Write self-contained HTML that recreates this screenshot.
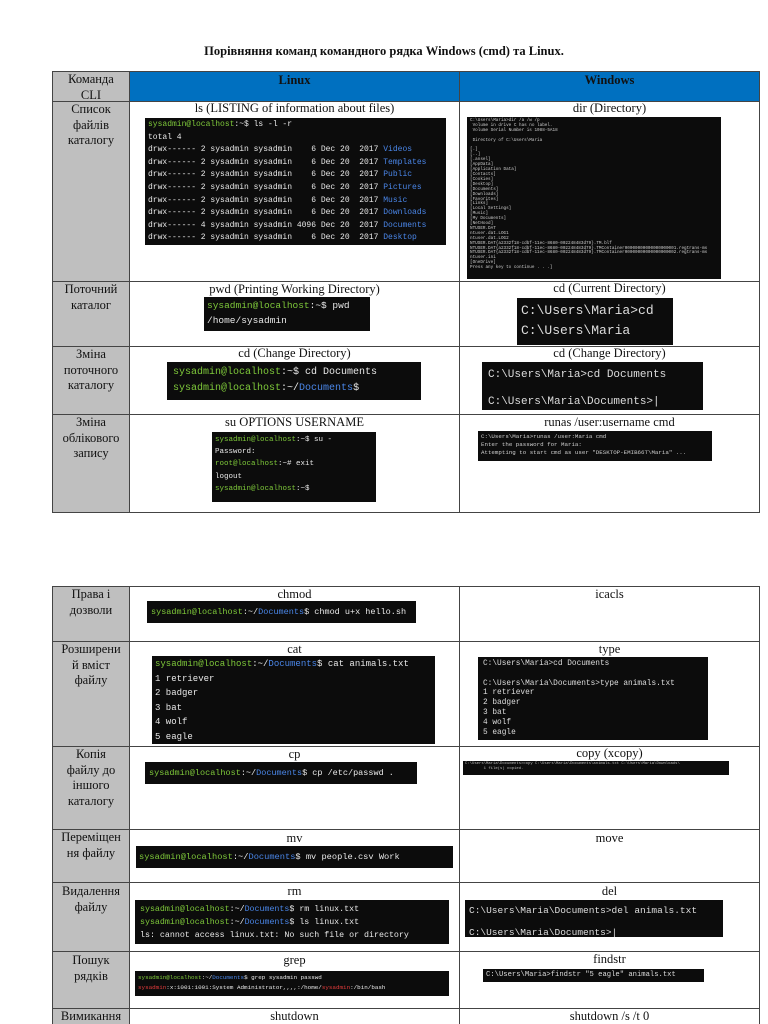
<!DOCTYPE html>
<html style="height:1024px;overflow:hidden"><head><meta charset="utf-8"><style>
body{margin:0;width:768px;height:1024px;background:#fff;position:relative;overflow:hidden;font-family:"Liberation Serif","DejaVu Serif",serif;color:#111}
.a{position:absolute}
.cell{position:absolute;border:1px solid #444;box-sizing:border-box}
.g{background:#bfbfbf}
.lab{position:absolute;text-align:center;font-size:12.5px;line-height:15.5px;color:#111}
.cap{position:absolute;text-align:center;font-size:12.5px;line-height:14px}
.term{position:absolute;background:#0c0c0c;color:#e8e8e8;font-family:"Liberation Mono","DejaVu Sans Mono",monospace;white-space:pre;overflow:hidden;box-sizing:border-box}
.gr{color:#7ec83a}.bl{color:#4a86e8}.rd{color:#e23b3b}
.nb{border-bottom:none}
</style></head><body>
<div class="a" style="left:0;top:44px;width:768px;text-align:center;font-weight:bold;font-size:12.5px">Порівняння команд командного рядка Windows (cmd) та Linux.</div>

<div class="cell g" style="left:52px;top:71px;width:78px;height:442px"></div>
<div class="cell" style="left:129px;top:71px;width:331px;height:31px;background:#0070c0"></div>
<div class="cell" style="left:459px;top:71px;width:301px;height:31px;background:#0070c0"></div>
<div class="cell" style="left:52px;top:71px;width:708px;height:442px;background:none"></div>
<div class="cell" style="left:129px;top:71px;width:331px;height:442px;background:none"></div>
<div class="a" style="left:52px;top:101px;width:708px;height:1px;background:#444"></div>
<div class="a" style="left:52px;top:281px;width:708px;height:1px;background:#444"></div>
<div class="a" style="left:52px;top:346px;width:708px;height:1px;background:#444"></div>
<div class="a" style="left:52px;top:414px;width:708px;height:1px;background:#444"></div>

<div class="lab" style="left:52px;top:72px;width:78px">Команда<br>CLI</div>
<div class="cap" style="left:129px;top:73px;width:331px;font-weight:bold">Linux</div>
<div class="cap" style="left:459px;top:73px;width:301px;font-weight:bold">Windows</div>

<div class="lab" style="left:52px;top:102px;width:78px">Список<br>файлів<br>каталогу</div>
<div class="cap" style="left:129px;top:101px;width:331px">ls (LISTING of information about files)</div>
<div class="cap" style="left:459px;top:101px;width:301px">dir (Directory)</div>
<div class="term" style="left:145px;top:118px;width:301px;height:127px;font-size:8px;line-height:12.6px;padding:1px 3px"><span class="gr">sysadmin@localhost</span>:~$ ls -l -r
total 4
drwx------ 2 sysadmin sysadmin    6 Dec 20  2017 <span class="bl">Videos</span>
drwx------ 2 sysadmin sysadmin    6 Dec 20  2017 <span class="bl">Templates</span>
drwx------ 2 sysadmin sysadmin    6 Dec 20  2017 <span class="bl">Public</span>
drwx------ 2 sysadmin sysadmin    6 Dec 20  2017 <span class="bl">Pictures</span>
drwx------ 2 sysadmin sysadmin    6 Dec 20  2017 <span class="bl">Music</span>
drwx------ 2 sysadmin sysadmin    6 Dec 20  2017 <span class="bl">Downloads</span>
drwx------ 4 sysadmin sysadmin 4096 Dec 20  2017 <span class="bl">Documents</span>
drwx------ 2 sysadmin sysadmin    6 Dec 20  2017 <span class="bl">Desktop</span></div>
<div class="term" style="left:467px;top:117px;width:254px;height:162px;font-size:4.3px;line-height:4.9px;padding:2px 3px;color:#ccc">C:\Users\Maria&gt;dir /a /w /p
 Volume in drive C has no label.
 Volume Serial Number is 1088-5A18

 Directory of C:\Users\Maria

[.]
[..]
[.ansel]
[AppData]
[Application Data]
[Contacts]
[Cookies]
[Desktop]
[Documents]
[Downloads]
[Favorites]
[Links]
[Local Settings]
[Music]
[My Documents]
[NetHood]
NTUSER.DAT
ntuser.dat.LOG1
ntuser.dat.LOG2
NTUSER.DAT{a2332f18-cdbf-11ec-8680-002248483d79}.TM.blf
NTUSER.DAT{a2332f18-cdbf-11ec-8680-002248483d79}.TMContainer00000000000000000001.regtrans-ms
NTUSER.DAT{a2332f18-cdbf-11ec-8680-002248483d79}.TMContainer00000000000000000002.regtrans-ms
ntuser.ini
[OneDrive]
Press any key to continue . . .]</div>

<div class="lab" style="left:52px;top:282px;width:78px">Поточний<br>каталог</div>
<div class="cap" style="left:129px;top:282px;width:331px">pwd (Printing Working Directory)</div>
<div class="cap" style="left:459px;top:281px;width:301px">cd (Current Directory)</div>
<div class="term" style="left:204px;top:297px;width:166px;height:34px;font-size:9.5px;line-height:15px;padding:1px 3px"><span class="gr">sysadmin@localhost</span>:~$ pwd
/home/sysadmin</div>
<div class="term" style="left:517px;top:298px;width:156px;height:47px;font-size:13px;line-height:20px;padding:3px 4px;color:#ddd">C:\Users\Maria&gt;cd
C:\Users\Maria</div>

<div class="lab" style="left:52px;top:347px;width:78px">Зміна<br>поточного<br>каталогу</div>
<div class="cap" style="left:129px;top:346px;width:331px">cd (Change Directory)</div>
<div class="cap" style="left:459px;top:346px;width:301px">cd (Change Directory)</div>
<div class="term" style="left:167px;top:362px;width:254px;height:38px;font-size:10px;line-height:16px;padding:3px 6px"><span class="gr">sysadmin@localhost</span>:~$ cd Documents
<span class="gr">sysadmin@localhost</span>:~/<span class="bl">Documents</span>$</div>
<div class="term" style="left:482px;top:362px;width:221px;height:48px;font-size:11px;line-height:27px;padding-left:6px;color:#ddd">C:\Users\Maria&gt;cd Documents
C:\Users\Maria\Documents&gt;|</div>

<div class="lab" style="left:52px;top:415px;width:78px">Зміна<br>облікового<br>запису</div>
<div class="cap" style="left:129px;top:415px;width:331px">su OPTIONS USERNAME</div>
<div class="cap" style="left:459px;top:415px;width:301px">runas /user:username cmd</div>
<div class="term" style="left:212px;top:432px;width:164px;height:70px;font-size:7.5px;line-height:12.2px;padding:2px 3px"><span class="gr">sysadmin@localhost</span>:~$ su -
Password:
<span class="gr">root@localhost</span>:~# exit
logout
<span class="gr">sysadmin@localhost</span>:~$</div>
<div class="term" style="left:478px;top:431px;width:234px;height:30px;font-size:5.8px;line-height:8px;padding:2px 3px;color:#ccc">C:\Users\Maria&gt;runas /user:Maria cmd
Enter the password for Maria:
Attempting to start cmd as user "DESKTOP-EMIB66T\Maria" ...</div>

<div class="cell g nb" style="left:52px;top:586px;width:78px;height:438px"></div>
<div class="cell nb" style="left:52px;top:586px;width:708px;height:438px;background:none"></div>
<div class="cell nb" style="left:129px;top:586px;width:331px;height:438px;background:none"></div>
<div class="a" style="left:52px;top:641px;width:708px;height:1px;background:#444"></div>
<div class="a" style="left:52px;top:746px;width:708px;height:1px;background:#444"></div>
<div class="a" style="left:52px;top:829px;width:708px;height:1px;background:#444"></div>
<div class="a" style="left:52px;top:882px;width:708px;height:1px;background:#444"></div>
<div class="a" style="left:52px;top:951px;width:708px;height:1px;background:#444"></div>
<div class="a" style="left:52px;top:1008px;width:708px;height:1px;background:#444"></div>

<div class="lab" style="left:52px;top:587px;width:78px">Права і<br>дозволи</div>
<div class="cap" style="left:129px;top:587px;width:331px">chmod</div>
<div class="cap" style="left:459px;top:587px;width:301px">icacls</div>
<div class="term" style="left:147px;top:601px;width:269px;height:22px;font-size:8.5px;line-height:22px;padding:0 4px"><span class="gr">sysadmin@localhost</span>:~/<span class="bl">Documents</span>$ chmod u+x hello.sh</div>

<div class="lab" style="left:52px;top:642px;width:78px">Розширени<br>й вміст<br>файлу</div>
<div class="cap" style="left:129px;top:642px;width:331px">cat</div>
<div class="cap" style="left:459px;top:642px;width:301px">type</div>
<div class="term" style="left:152px;top:656px;width:283px;height:88px;font-size:9px;line-height:14.5px;padding:1px 3px"><span class="gr">sysadmin@localhost</span>:~/<span class="bl">Documents</span>$ cat animals.txt
1 retriever
2 badger
3 bat
4 wolf
5 eagle</div>
<div class="term" style="left:478px;top:657px;width:230px;height:83px;font-size:7.8px;line-height:9.8px;padding:3px 5px;color:#ddd">C:\Users\Maria&gt;cd Documents

C:\Users\Maria\Documents&gt;type animals.txt
1 retriever
2 badger
3 bat
4 wolf
5 eagle</div>

<div class="lab" style="left:52px;top:747px;width:78px">Копія<br>файлу до<br>іншого<br>каталогу</div>
<div class="cap" style="left:129px;top:747px;width:331px">cp</div>
<div class="cap" style="left:459px;top:746px;width:301px">copy (xcopy)</div>
<div class="term" style="left:145px;top:762px;width:272px;height:22px;font-size:8.5px;line-height:22px;padding:0 4px"><span class="gr">sysadmin@localhost</span>:~/<span class="bl">Documents</span>$ cp /etc/passwd .</div>
<div class="term" style="left:463px;top:761px;width:266px;height:14px;font-size:3.9px;line-height:5px;padding:1px 2px;color:#bbb">C:\Users\Maria\Documents&gt;copy C:\Users\Maria\Documents\animals.txt C:\Users\Maria\Downloads\
        1 file(s) copied.</div>

<div class="lab" style="left:52px;top:830px;width:78px">Переміщен<br>ня файлу</div>
<div class="cap" style="left:129px;top:831px;width:331px">mv</div>
<div class="cap" style="left:459px;top:831px;width:301px">move</div>
<div class="term" style="left:136px;top:846px;width:317px;height:22px;font-size:8.7px;line-height:22px;padding:0 3px"><span class="gr">sysadmin@localhost</span>:~/<span class="bl">Documents</span>$ mv people.csv Work</div>

<div class="lab" style="left:52px;top:884px;width:78px">Видалення<br>файлу</div>
<div class="cap" style="left:129px;top:884px;width:331px">rm</div>
<div class="cap" style="left:459px;top:884px;width:301px">del</div>
<div class="term" style="left:135px;top:900px;width:314px;height:44px;font-size:8.3px;line-height:13px;padding:3px 5px"><span class="gr">sysadmin@localhost</span>:~/<span class="bl">Documents</span>$ rm linux.txt
<span class="gr">sysadmin@localhost</span>:~/<span class="bl">Documents</span>$ ls linux.txt
ls: cannot access linux.txt: No such file or directory</div>
<div class="term" style="left:465px;top:900px;width:258px;height:37px;font-size:9.5px;line-height:22px;padding:0 4px;color:#ddd">C:\Users\Maria\Documents&gt;del animals.txt
C:\Users\Maria\Documents&gt;|</div>

<div class="lab" style="left:52px;top:953px;width:78px">Пошук<br>рядків</div>
<div class="cap" style="left:129px;top:953px;width:331px">grep</div>
<div class="cap" style="left:459px;top:952px;width:301px">findstr</div>
<div class="term" style="left:135px;top:971px;width:314px;height:25px;font-size:5.9px;line-height:10px;padding:2px 3px"><span class="gr">sysadmin@localhost</span>:~/<span class="bl">Documents</span>$ grep sysadmin passwd
<span class="rd">sysadmin</span>:x:1001:1001:System Administrator,,,,:/home/<span class="rd">sysadmin</span>:/bin/bash</div>
<div class="term" style="left:483px;top:969px;width:221px;height:13px;font-size:7.2px;line-height:13px;padding:0 3px;color:#ddd">C:\Users\Maria&gt;findstr "5 eagle" animals.txt</div>

<div class="lab" style="left:52px;top:1009px;width:78px">Вимикання</div>
<div class="cap" style="left:129px;top:1009px;width:331px">shutdown</div>
<div class="cap" style="left:459px;top:1009px;width:301px">shutdown /s /t 0</div>
</body></html>
